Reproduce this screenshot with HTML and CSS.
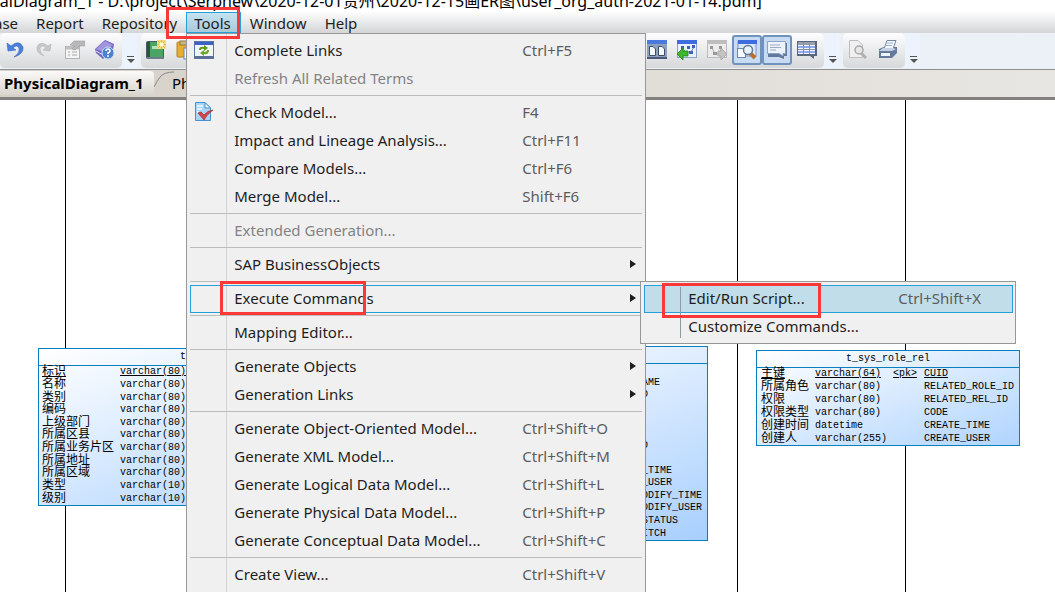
FILE: index.html
```
<!DOCTYPE html>
<html lang="en">
<head>
    <meta charset="UTF-8">
    <meta name="viewport" content="width=device-width, initial-scale=1.0">
    <title>PhysicalDiagram_1</title>
    <link rel="stylesheet" href="styles.css">
</head>
<body>
    <header class="titlebar">
        <span class="title">icalDiagram_1 - D:\project\Serpnew\2020-12-01贵州\2020-12-15画ER图\user_org_auth-2021-01-14.pdm]</span>
    </header>

    <nav class="menubar">
        <button class="menubar-item first">ase</button>
        <button class="menubar-item">Report</button>
        <button class="menubar-item">Repository</button>
        <div class="menubar-open">
            <button class="menubar-item active">Tools</button>

            <div class="menu tools-menu">
                <button class="menu-item">
                    <svg class="menu-icon" viewBox="0 0 20 20">
                        <rect x="0.5" y="1.5" width="19" height="17" fill="#f0f5fe" stroke="#5a74a8"/>
                        <rect x="1" y="2" width="18" height="3" fill="#3c62c8"/>
                        <rect x="1" y="16" width="18" height="3" fill="#5b6f96"/>
                        <path d="M5 10Q5 6 10 7V5L14 8L10 11V9Q7 8 7 10Z" fill="#5a9a14"/>
                        <path d="M15 10Q15 15 10 14V16L6 13L10 10V12Q13 12 13 10Z" fill="#6aa81c"/>
                    </svg>
                    <span class="label">Complete Links</span><kbd>Ctrl+F5</kbd>
                </button>
                <button class="menu-item" disabled><span class="label">Refresh All Related Terms</span></button>
                <hr>
                <button class="menu-item">
                    <svg class="menu-icon" viewBox="0 0 20 20">
                        <path d="M1.5 0.5H11L16.5 6V18.5H1.5Z" fill="#a8d6f8" stroke="#4a90cc"/>
                        <path d="M11 0.5V6H16.5Z" fill="#eef8ff" stroke="#4a90cc"/>
                        <path d="M3 4H9M3 7H8M3 10H5" stroke="#dff1ff" stroke-width="2"/>
                        <path d="M4 11L7 10L10 13Q13 9 19 8Q13 12 10 18Z" fill="#d4474a" stroke="#a83038" stroke-width="0.8"/>
                    </svg>
                    <span class="label">Check Model...</span><kbd>F4</kbd>
                </button>
                <button class="menu-item"><span class="label">Impact and Lineage Analysis...</span><kbd>Ctrl+F11</kbd></button>
                <button class="menu-item"><span class="label">Compare Models...</span><kbd>Ctrl+F6</kbd></button>
                <button class="menu-item"><span class="label">Merge Model...</span><kbd>Shift+F6</kbd></button>
                <hr>
                <button class="menu-item" disabled><span class="label">Extended Generation...</span></button>
                <hr>
                <button class="menu-item has-sub"><span class="label">SAP BusinessObjects</span></button>
                <hr>
                <div class="submenu-anchor">
                    <button class="menu-item has-sub open"><span class="label">Execute Commands</span></button>
                    <div class="menu submenu">
                        <button class="menu-item selected"><span class="label">Edit/Run Script...</span><kbd>Ctrl+Shift+X</kbd></button>
                        <button class="menu-item"><span class="label">Customize Commands...</span></button>
                    </div>
                </div>
                <hr>
                <button class="menu-item"><span class="label">Mapping Editor...</span></button>
                <hr>
                <button class="menu-item has-sub"><span class="label">Generate Objects</span></button>
                <button class="menu-item has-sub"><span class="label">Generation Links</span></button>
                <hr>
                <button class="menu-item"><span class="label">Generate Object-Oriented Model...</span><kbd>Ctrl+Shift+O</kbd></button>
                <button class="menu-item"><span class="label">Generate XML Model...</span><kbd>Ctrl+Shift+M</kbd></button>
                <button class="menu-item"><span class="label">Generate Logical Data Model...</span><kbd>Ctrl+Shift+L</kbd></button>
                <button class="menu-item"><span class="label">Generate Physical Data Model...</span><kbd>Ctrl+Shift+P</kbd></button>
                <button class="menu-item"><span class="label">Generate Conceptual Data Model...</span><kbd>Ctrl+Shift+C</kbd></button>
                <hr>
                <button class="menu-item"><span class="label">Create View...</span><kbd>Ctrl+Shift+V</kbd></button>
            </div>
        </div>
        <button class="menubar-item">Window</button>
        <button class="menubar-item">Help</button>
    </nav>

    <div class="toolbar">
        <div class="tool-group">
            <button class="tool" aria-label="Undo">
                <svg viewBox="0 0 20 20">
                    <path d="M2 3L3 11L11 10L8 8Q12 4 14 8Q15 13 9 17Q19 14 18 7Q14 -1 6 6Z" fill="#4a7fdc" stroke="#3566c0" stroke-width="0.6"/>
                </svg>
            </button>
            <button class="tool" aria-label="Redo">
                <svg viewBox="0 0 20 20">
                    <path d="M16 4L15 11L8 10L11 8Q7 4 5 8Q4 12 9 16Q1 13 2 7Q5 0 13 6Z" fill="#c6c8ca" stroke="#b0b2b4" stroke-width="0.6"/>
                </svg>
            </button>
            <button class="tool" aria-label="Properties">
                <svg viewBox="0 0 20 20">
                    <rect x="0.5" y="6.5" width="14" height="12" fill="#f4f4f4" stroke="#b4b4b4"/>
                    <path d="M1 8H14" stroke="#c0c0c0" stroke-width="3"/>
                    <path d="M3 12H5M7 12H12M3 15H5M7 15H12" stroke="#aaa"/>
                    <path d="M5 5L9 1H20V6H14L10 10L7 9L10 6Z" fill="#b8b8b8" stroke="#a0a0a0" stroke-width="0.6"/>
                </svg>
            </button>
            <button class="tool" aria-label="Help">
                <svg viewBox="0 0 20 20">
                    <path d="M0 9L10 0L19 4L18 10L8 19L1 13Z" fill="#7466c0"/>
                    <path d="M1 9L10 1L18 5L8 12Z" fill="#a396e0"/>
                    <path d="M1 11L8 15L17 8" fill="none" stroke="#e4e0f8"/>
                    <circle cx="13" cy="13" r="6" fill="#4a80d0" stroke="#cfe0f8"/>
                    <path d="M11 11Q11 9 13 9T15 11Q15 12 13 13V14M13 15V17" fill="none" stroke="#fff" stroke-width="1.5"/>
                </svg>
            </button>
        </div>
        <button class="overflow" aria-label="Toolbar options"></button>

        <div class="tool-group">
            <button class="tool" aria-label="New model">
                <svg viewBox="0 0 20 20">
                    <rect x="0.5" y="1.5" width="17" height="17" rx="1" fill="#4aa564" stroke="#4a5a68"/>
                    <path d="M2.5 2V18" stroke="#28583c" stroke-width="3"/>
                    <rect x="6" y="6" width="7" height="3" fill="#b4e2bc"/>
                    <path d="M1 18H18" stroke="#6c7c88" stroke-width="2"/>
                    <rect x="11" y="0" width="9" height="9" fill="#f2de80"/>
                    <path d="M15.5 0V9M11 4.500H20M12 1L19 8M19 1L12 8" stroke="#e8b830"/>
                    <circle cx="15.5" cy="4.5" r="2" fill="#fffbe0"/>
                </svg>
            </button>
            <button class="tool" aria-label="Paste">
                <svg viewBox="0 0 20 20">
                    <rect x="1" y="2" width="15" height="15" rx="1" fill="#e8ae30" stroke="#b48024"/>
                    <rect x="4" y="1" width="9" height="4" fill="#c8b888" stroke="#907840"/>
                    <rect x="8" y="8" width="11" height="11" fill="#f4f8ff" stroke="#6a86b8"/>
                </svg>
            </button>
            <span class="tool-gap"></span>
            <button class="tool" aria-label="Find models">
                <svg viewBox="0 0 20 20">
                    <rect x="0" y="0" width="20" height="19" fill="#8ea0bc"/>
                    <rect x="0" y="0" width="20" height="4" fill="#4a7ae0"/>
                    <path d="M0 18H20" stroke="#46597a" stroke-width="2"/>
                    <path d="M2.5 6.5H6L8.5 9V15.5H2.5ZM11.5 6.5H15L17.5 9V15.5H11.5Z" fill="#f6f9ff" stroke="#38506e"/>
                </svg>
            </button>
            <button class="tool" aria-label="Previous diagram">
                <svg viewBox="0 0 20 20">
                    <rect x="0.5" y="0.5" width="19" height="17" fill="#eaf1fd" stroke="#8aa2c8"/>
                    <rect x="0" y="0" width="20" height="4" fill="#3d6de0"/>
                    <path d="M5 8L9 12H14L17 7" fill="none" stroke="#7080a8"/>
                    <path d="M4 6H7V9H4ZM10 6H13V9H10ZM15 5H18V8H15ZM12 11H16V14H12Z" fill="#3e60b8"/>
                    <path d="M0 14L6 8V11H11V16H6V20Z" fill="#3cb82c" stroke="#1f8420" stroke-width="0.8"/>
                </svg>
            </button>
            <button class="tool" aria-label="Next diagram">
                <svg viewBox="0 0 20 20">
                    <rect x="0.5" y="0.5" width="19" height="17" fill="#ececec" stroke="#bcbcbc"/>
                    <rect x="0" y="0" width="20" height="4" fill="#bebebe"/>
                    <path d="M5 8L8 14H12L15 8" fill="none" stroke="#aaa"/>
                    <path d="M3 6H6V9H3ZM12 6H15V9H12ZM6 12H10V15H6Z" fill="#989898"/>
                    <path d="M20 14L14 8V11H11V16H14V20Z" fill="#c4c4c4" stroke="#a4a4a4" stroke-width="0.8"/>
                </svg>
            </button>
            <button class="tool pressed" aria-label="Browser">
                <svg viewBox="0 0 20 20">
                    <rect x="1" y="1" width="18" height="15" fill="#dbe8fb" stroke="#7894c8"/>
                    <rect x="1" y="0" width="19" height="4" fill="#3d6de0"/>
                    <rect x="0.5" y="8.5" width="8" height="9" fill="#f8fbff" stroke="#7086a8"/>
                    <path d="M13 13L18 18" stroke="#b8722c" stroke-width="4"/>
                    <circle cx="11" cy="10" r="4.5" fill="#e8f4fc" stroke="#667a90" stroke-width="1.5"/>
                </svg>
            </button>
            <button class="tool pressed" aria-label="Output">
                <svg viewBox="0 0 20 20">
                    <path d="M1 3H20V16H17V19L12 17H1Z" fill="#64789c"/>
                    <path d="M0.5 1.5H18.5V13.500H16V16L12 13.500H0.5Z" fill="#edf3fd" stroke="#8ba3c8"/>
                    <path d="M3 5H13M3 7.500H14M3 10H9" stroke="#a0acc0"/>
                </svg>
            </button>
            <button class="tool" aria-label="Result list">
                <svg viewBox="0 0 20 20">
                    <path d="M0 1H20V16H17V19L13 16H0Z" fill="#5a6680"/>
                    <path d="M1 5H18V14H1Z" fill="#f2f5fc"/>
                    <path d="M1 7H18M1 12H18" stroke="#8cabf0" stroke-width="2"/>
                    <path d="M1 2H18V5H1Z" fill="#98a0b0"/>
                    <path d="M6.5 2V14M12.5 2V14M1 9.500H18" stroke="#8490a8"/>
                </svg>
            </button>
        </div>
        <button class="overflow" aria-label="Toolbar options"></button>

        <div class="tool-group">
            <button class="tool" aria-label="Print preview">
                <svg viewBox="0 0 20 20">
                    <path d="M1.5 0.5H10L14.5 5V17.5H1.5Z" fill="#f0f0f0" stroke="#bcbcbc"/>
                    <path d="M13 13L18 18" stroke="#b0b0b0" stroke-width="3"/>
                    <circle cx="11" cy="10" r="4" fill="#e4e6e8" stroke="#a8a8a8" stroke-width="1.5"/>
                </svg>
            </button>
            <button class="tool" aria-label="Print">
                <svg viewBox="0 0 20 20">
                    <path d="M1 9L6 7H19V13L14 18H1Z" fill="#64799c"/>
                    <path d="M6 9L9 0.5H18L15 9Z" fill="#f3f7fd" stroke="#7386a4"/>
                    <path d="M1 11H14L18 9L15 8H5Z" fill="#c5d2e5"/>
                    <path d="M9 3H15M8 5.5H14" stroke="#a4b4cc"/>
                    <path d="M3 13H12V16H3Z" fill="#edf5fc"/>
                </svg>
            </button>
        </div>
        <button class="overflow" aria-label="Toolbar options"></button>
    </div>

    <div class="tabs">
        <button class="tab current">PhysicalDiagram_1</button>
        <svg class="tab-slope" viewBox="0 0 20 24"><path d="M0 16Q3 10 6 6Q10 1 20 1" fill="none" stroke="#8c8984"/></svg>
        <button class="tab">Ph</button>
    </div>

    <main class="canvas">
        <div class="link link-a"></div>
        <div class="link link-b"></div>
        <div class="link link-c"></div>

        <section class="entity entity-org">
            <h2>t_</h2>
            <table>
                <tr><td><u>标识</u></td><td><u>varchar(80)</u></td></tr>
                <tr><td>名称</td><td>varchar(80)</td></tr>
                <tr><td>类别</td><td>varchar(80)</td></tr>
                <tr><td>编码</td><td>varchar(80)</td></tr>
                <tr><td>上级部门</td><td>varchar(80)</td></tr>
                <tr><td>所属区县</td><td>varchar(80)</td></tr>
                <tr><td>所属业务片区</td><td>varchar(80)</td></tr>
                <tr><td>所属地址</td><td>varchar(80)</td></tr>
                <tr><td>所属区域</td><td>varchar(80)</td></tr>
                <tr><td>类型</td><td>varchar(10)</td></tr>
                <tr><td>级别</td><td>varchar(10)</td></tr>
            </table>
        </section>

        <section class="entity entity-user">
            <h2></h2>
            <table>
                <tr><td></td></tr>
                <tr><td>AME</td></tr>
                <tr><td>D</td></tr>
                <tr><td></td></tr>
                <tr><td></td></tr>
                <tr><td></td></tr>
                <tr><td>D</td></tr>
                <tr><td></td></tr>
                <tr><td>_TIME</td></tr>
                <tr><td>_USER</td></tr>
                <tr><td>ODIFY_TIME</td></tr>
                <tr><td>ODIFY_USER</td></tr>
                <tr><td>STATUS</td></tr>
                <tr><td>ITCH</td></tr>
            </table>
        </section>

        <section class="entity entity-role">
            <h2>t_sys_role_rel</h2>
            <table>
                <tr><td><u>主键</u></td><td><u>varchar(64)</u></td><td><u>&lt;pk&gt;</u></td><td><u>CUID</u></td></tr>
                <tr><td>所属角色</td><td>varchar(80)</td><td></td><td>RELATED_ROLE_ID</td></tr>
                <tr><td>权限</td><td>varchar(80)</td><td></td><td>RELATED_REL_ID</td></tr>
                <tr><td>权限类型</td><td>varchar(80)</td><td></td><td>CODE</td></tr>
                <tr><td>创建时间</td><td>datetime</td><td></td><td>CREATE_TIME</td></tr>
                <tr><td>创建人</td><td>varchar(255)</td><td></td><td>CREATE_USER</td></tr>
            </table>
        </section>
    </main>

    <!-- red annotation frames -->
    <div class="mark mark-tools"></div>
    <div class="mark mark-execute"></div>
    <div class="mark mark-script"></div>
</body>
</html>
```
FILE: styles.css
```
* {
    margin: 0;
    padding: 0;
    box-sizing: border-box;
}

body {
    position: relative;
    display: flex;
    flex-direction: column;
    height: 100vh;
    overflow: hidden;
    background-color: #fff;
    color: #1e1e1e;
    font-family: 'Noto Sans', 'Noto Sans CJK SC', sans-serif;
    font-size: 15px;
}

button {
    border: none;
    background: none;
    font: inherit;
    color: inherit;
    text-align: left;
    white-space: nowrap;
}

.titlebar {
    display: flex;
    align-items: flex-end;
    flex: none;
    height: 12px;
    padding-bottom: 1px;
    overflow: hidden;
    color: #000;
}

.title {
    margin-left: -12px;
    font-size: 16px;
    line-height: 20px;
    white-space: nowrap;
}

/* menu bar */
.menubar {
    display: flex;
    flex: none;
    height: 21px;
    background: linear-gradient(#fdfdfd, #d3d5d7);
}

.menubar-item {
    height: 21px;
    padding: 0 9px;
    line-height: 20px;
}

.menubar-item.first {
    padding-left: 0;
    margin-left: -6px;
}

.menubar-open {
    position: relative;
}

.menubar-item.active {
    padding: 0 9px 0 7px;
    border: 1px solid #26a0da;
    background: linear-gradient(#c5e2ef, #a9cadb);
    line-height: 18px;
}

/* drop-down menus */
.menu {
    position: absolute;
    z-index: 10;
    border: 1px solid #979797;
    background-color: #f0f0f0;
}

.tools-menu {
    top: 21px;
    left: 0;
    width: 460px;
    padding: 3px 3px 6px;
    background: linear-gradient(#d4d4d4, #d4d4d4) 39px 0 / 1px 100% no-repeat #f0f0f0;
}

.menu-item {
    position: relative;
    display: flex;
    align-items: center;
    width: 100%;
    height: 28px;
    padding-bottom: 2px;
    padding-left: 44px;
}

.menu-item .label {
    flex: 1;
}

.menu-item kbd {
    flex: none;
    width: 120px;
    font: inherit;
    color: #5c5c5c;
}

.menu-item:disabled {
    color: #838383;
}

.menu-icon {
    position: absolute;
    left: 4px;
    width: 20px;
    height: 20px;
}

.has-sub::after {
    content: "";
    margin-right: 6px;
    border: 4px solid transparent;
    border-left: 6px solid #1e1e1e;
    border-right: none;
}

.menu-item.open,
.menu-item.selected {
    padding-left: 43px;
    border: 1px solid #26a0da;
}

.menu-item.open::after {
    margin-right: 5px;
}

.menu-item.selected {
    background-color: #c0dde9;
}

.menu hr {
    height: 1px;
    margin: 2px 0 3px;
    border: none;
    background-color: #bcbcbc;
}

.submenu-anchor {
    position: relative;
}

.submenu {
    top: -4px;
    left: 450px;
    width: 376px;
    padding: 3px 2px 2px 3px;
}

.submenu::after {
    content: "";
    position: absolute;
    top: 5px;
    bottom: 5px;
    left: 39px;
    width: 1px;
    background-color: #8e9ba2;
}

.submenu kbd {
    width: 114px;
}

/* toolbar */
.toolbar {
    display: flex;
    flex: none;
    height: 37px;
    padding-bottom: 1px;
    border-bottom: 1px solid #8f8f8f;
    background-color: #ecf0f7;
}

.tool-group {
    display: flex;
    padding-right: 2px;
    border-radius: 5px;
    background: linear-gradient(#fdfdfe, #d6d8da);
}

.tool {
    display: flex;
    align-items: center;
    justify-content: center;
    width: 30px;
    height: 30px;
    margin-top: 2px;
}

.tool svg {
    width: 20px;
    height: 20px;
}

.tool.pressed {
    border: 2px solid #6f93bd;
    border-radius: 3px;
    background-color: #c8dbf3;
}

.tool-gap {
    flex: none;
    width: 441px;
}

.overflow {
    position: relative;
    width: 15px;
    margin-right: 4px;
    background: linear-gradient(#555, #555) 5px 23px / 7px 1px no-repeat #edf3fc;
}

.overflow::after {
    content: "";
    position: absolute;
    top: 26px;
    left: 5px;
    border: 4px solid transparent;
    border-top-color: #555;
    border-bottom: none;
}

/* diagram tabs */
.tabs {
    display: flex;
    flex: none;
    height: 30px;
    padding-top: 1px;
    border-bottom: 3px solid #848080;
    background: linear-gradient(90deg, #d5d0c7, #e8e6e2);
    color: #000;
}

.tab {
    height: 24px;
    line-height: 22px;
}

.tab.current {
    width: 154px;
    padding-left: 4px;
    border-radius: 0 4px 0 0;
    background: linear-gradient(#fbfaf9, #d9d6cf);
    font-weight: bold;
}

.tab-slope {
    width: 20px;
    height: 24px;
    margin-right: -2px;
}

/* diagram */
.canvas {
    position: relative;
    flex: 1;
    overflow: hidden;
    background-color: #fff;
}

.link {
    position: absolute;
    top: 0;
    bottom: 0;
    width: 1px;
    background-color: #000;
}

.link-a {
    left: 65px;
}

.link-b {
    left: 737px;
}

.link-c {
    left: 905px;
}

.entity {
    position: absolute;
    border: 1px solid #0a7fc0;
    background: linear-gradient(160deg, #fff, #b0d4fe);
    color: #000;
    font-family: 'Liberation Mono', 'Noto Sans CJK SC', monospace;
    font-size: 10px;
}

.entity h2 {
    height: 17px;
    border-bottom: 1px solid #0a7fc0;
    font-size: 10px;
    font-weight: normal;
    line-height: 15px;
    text-align: center;
}

.entity table {
    border-collapse: collapse;
}

.entity td {
    height: 12px;
    line-height: 12px;
    white-space: nowrap;
}

.entity-org td:first-child,
.entity-role td:first-child {
    font-size: 12px;
}

.entity-org {
    top: 248px;
    left: 38px;
    width: 296px;
}

.entity-org table {
    height: 139px;
    margin-left: 3px;
}

.entity-org td:first-child {
    width: 78px;
}

.entity-user {
    top: 246px;
    left: 412px;
    width: 296px;
    background: linear-gradient(160deg, #fff, #a8cffe);
}

.entity-user table {
    height: 176px;
    margin-left: 229px;
}

.entity-role {
    top: 250px;
    left: 756px;
    width: 264px;
}

.entity-role table {
    height: 77px;
    margin-left: 4px;
}

.entity-role td:first-child {
    width: 54px;
}

.entity-role td:nth-child(2) {
    width: 78px;
}

.entity-role td:nth-child(3) {
    width: 31px;
}

/* annotation frames */
.mark {
    position: absolute;
    z-index: 20;
    border: 3px solid #fb3838;
    pointer-events: none;
}

.mark-tools {
    top: 7px;
    left: 166px;
    width: 74px;
    height: 32px;
}

.mark-execute {
    top: 281px;
    left: 220px;
    width: 146px;
    height: 34px;
}

.mark-script {
    top: 283px;
    left: 662px;
    width: 159px;
    height: 35px;
}
```
